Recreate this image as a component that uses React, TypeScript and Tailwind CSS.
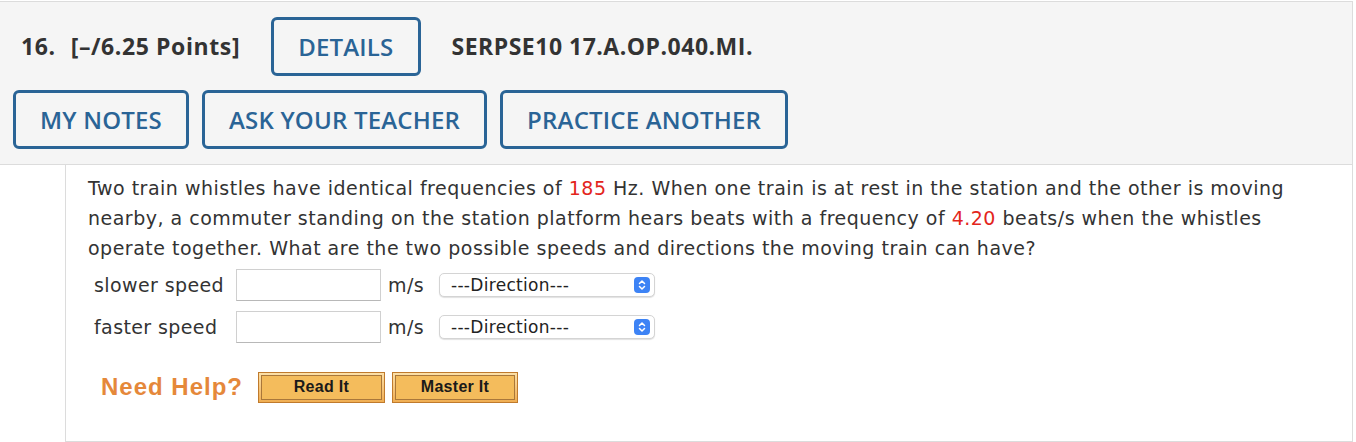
import React from 'react';

const headerBtn =
  "h-[59px] px-[24px] flex items-center justify-center border-[3px] border-[#2a6496] rounded-[6px] text-[#2a6496] text-[24px] font-semibold tracking-[0.2px] bg-[#f5f5f5]";

function DirectionSelect() {
  return (
    <div className="w-[216px] h-[24px] flex items-center justify-between pl-[11px] pr-[4px] bg-white border border-[#d4d4d4] rounded-[5px] shadow-[0_1px_1px_rgba(0,0,0,0.12)]">
      <span className="font-['DejaVu_Sans',sans-serif] text-[17px] tracking-[0.3px] leading-none text-[#222]">---Direction---</span>
      <span className="w-[16px] h-[16px] rounded-[4px] bg-[#3d83f5] flex items-center justify-center">
        <svg width="8" height="12" viewBox="0 0 8 12" fill="none">
          <path d="M1.5 4.5 L4 2 L6.5 4.5" stroke="white" strokeWidth="1.5" strokeLinecap="round" strokeLinejoin="round" />
          <path d="M1.5 7.5 L4 10 L6.5 7.5" stroke="white" strokeWidth="1.5" strokeLinecap="round" strokeLinejoin="round" />
        </svg>
      </span>
    </div>
  );
}

function HelpButton({ label, width }: { label: string; width: string }) {
  return (
    <div className={`${width} h-[31px] p-[2px] border border-[#c07a2c] bg-gradient-to-b from-[#fbe0a8] to-[#f0ae52]`}>
      <div className="w-full h-full border border-[#a9773a] bg-[#f4bc5c] flex items-center justify-center font-['Liberation_Sans',Arial,sans-serif] font-bold text-[16px] tracking-[0.3px] text-[#1a1a1a]">
        {label}
      </div>
    </div>
  );
}

export default function App() {
  return (
    <div className="w-[1356px] h-[442px] bg-white pt-[1px] font-['Open_Sans',sans-serif]">
      {/* Question header */}
      <div className="w-[1353px] h-[164px] bg-[#f5f5f5] border border-l-0 border-[#dcdcdc] pt-[15px]">
        <div className="flex items-center">
          <div className="ml-[21px] flex items-center gap-[15px] text-[23px] font-bold tracking-[0.6px] text-[#333]">
            <span>16.</span>
            <span>[–/6.25 Points]</span>
          </div>
          <div className={`${headerBtn} ml-[31px]`}>DETAILS</div>
          <div className="ml-[31px] text-[23px] font-bold text-[#333] tracking-[0.5px]">SERPSE10 17.A.OP.040.MI.</div>
        </div>
        <div className="flex items-center gap-[13px] ml-[13px] mt-[14px]">
          <div className={headerBtn}>MY NOTES</div>
          <div className={headerBtn}>ASK YOUR TEACHER</div>
          <div className={headerBtn}>PRACTICE ANOTHER</div>
        </div>
      </div>

      {/* Question body */}
      <div className="ml-[65px] w-[1288px] h-[277px] border border-t-0 border-[#dcdcdc] pl-[22px] pr-[30px] pt-[8px] text-[#333]">
        <p className="font-['DejaVu_Sans',sans-serif] text-[19px] tracking-[0.5px] leading-[30px]">
          Two train whistles have identical frequencies of <span className="text-[#e3251c]">185</span> Hz. When one train is at rest in the station and the other is moving nearby, a commuter standing on the station platform hears beats with a frequency of <span className="text-[#e3251c]">4.20</span> beats/s when the whistles operate together. What are the two possible speeds and directions the moving train can have?
        </p>

        <div className="mt-[6px] ml-[6px] flex flex-col gap-[10px] font-['DejaVu_Sans',sans-serif] text-[19px] tracking-[0.4px]">
          {['slower speed', 'faster speed'].map((label) => (
            <div key={label} className="flex items-center h-[32px]">
              <span className="w-[142px]">{label}</span>
              <div className="w-[145px] h-[32px] bg-white border border-[#d0d0d0] border-b-[#b8b8b8]" />
              <span className="ml-[7px] w-[51px]">m/s</span>
              <DirectionSelect />
            </div>
          ))}
        </div>

        <div className="mt-[26px] ml-[13px] flex items-center">
          <span className="font-['Liberation_Sans',Arial,sans-serif] font-bold text-[24px] tracking-[1px] text-[#e5883a] w-[157px]">Need Help?</span>
          <HelpButton label="Read It" width="w-[127px]" />
          <div className="w-[7px]" />
          <HelpButton label="Master It" width="w-[126px]" />
        </div>
      </div>
    </div>
  );
}
